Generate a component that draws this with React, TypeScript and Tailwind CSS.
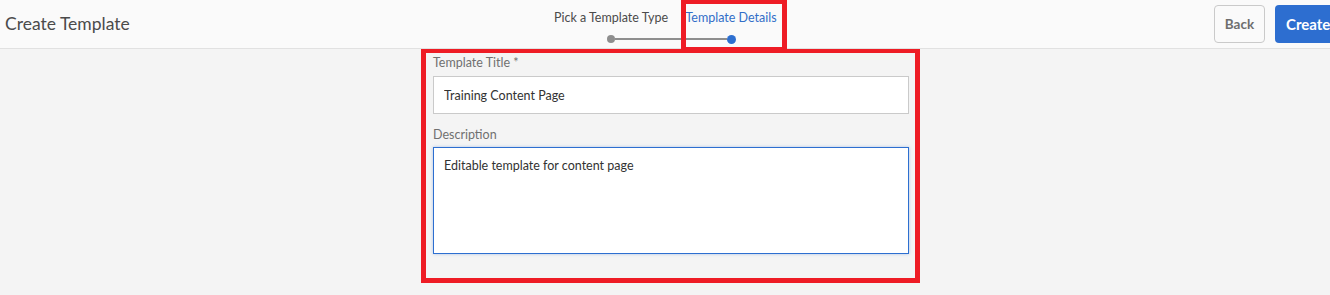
import { useState } from "react";

const font = { fontFamily: "Lato, 'Open Sans', sans-serif" };

function Stepper() {
  return (
    <div className="grid grid-cols-[120px_120px]">
      <div className="flex flex-col items-center">
        <span className="text-[12.5px] leading-[18px] text-[#4b4b4b]">Pick a Template Type</span>
        <div className="mt-[8px] flex w-full items-center">
          <span className="flex-1" />
          <span className="h-[8px] w-[8px] rounded-full bg-[#8e8e8e]" />
          <span className="h-[2px] flex-1 bg-[#8e8e8e]" />
        </div>
      </div>
      <div className="flex flex-col items-center">
        <span className="text-[12.5px] leading-[18px] text-[#326ec8]">Template Details</span>
        <div className="mt-[8px] flex w-full items-center">
          <span className="h-[2px] flex-1 bg-[#8e8e8e]" />
          <span className="h-[9px] w-[9px] rounded-full bg-[#2d6fd0]" />
          <span className="flex-1" />
        </div>
      </div>
    </div>
  );
}

export default function App() {
  const [title, setTitle] = useState("Training Content Page");
  const [description, setDescription] = useState("Editable template for content page");

  return (
    <div className="h-[295px] w-full overflow-hidden bg-[#f4f4f4]" style={font}>
      <header className="relative grid h-[49px] grid-cols-[1fr_auto_1fr] items-center border-b border-[#e1e1e1] bg-[#fafafa]">
        <h1 className="pl-[5px] text-[17.5px] font-normal text-[#4b4b4b]">Create Template</h1>
        <div className="ml-[12px] pt-[4px]">
          <Stepper />
        </div>
        <div className="mr-[-16px] flex justify-end gap-[10px]">
          <button className="h-[38px] w-[51px] rounded-[4px] border border-[#cacaca] bg-[#fafafa] text-[13.5px] font-bold text-[#6e6e6e]">
            Back
          </button>
          <button className="h-[38px] w-[71px] rounded-[4px] bg-[#2d6ed0] pl-[11px] text-left text-[15px] font-bold text-white">
            Create
          </button>
        </div>
        <div className="pointer-events-none absolute left-[681px] top-[-1px] h-[53px] w-[106px] border-[5px] border-[#ee1c25]" />
      </header>

      <main className="mt-[-1px] flex justify-center">
        <div className="ml-[11px] w-[499px] border-[5px] border-[#ee1c25] pb-[24px] pl-[7px] pr-[6px] pt-[2px]">
          <label className="block text-[12.5px] leading-[16px] text-[#707070]">
            Template Title *
            <input
              value={title}
              onChange={(e) => setTitle(e.target.value)}
              className="mt-[5px] block h-[38px] w-full border border-[#cacaca] bg-white px-[10px] text-[12.5px] text-[#323232] outline-none"
            />
          </label>
          <label className="mt-[13px] block text-[12.5px] leading-[16px] text-[#707070]">
            Description
            <textarea
              value={description}
              onChange={(e) => setDescription(e.target.value)}
              className="mt-[4px] block h-[107px] w-full resize-none border border-[#2d6fd0] bg-white px-[10px] pb-[9px] pt-[9px] text-[12.5px] leading-[18px] text-[#323232] shadow-[0_0_3px_rgba(45,111,208,0.35)] outline-none"
            />
          </label>
        </div>
      </main>
    </div>
  );
}
